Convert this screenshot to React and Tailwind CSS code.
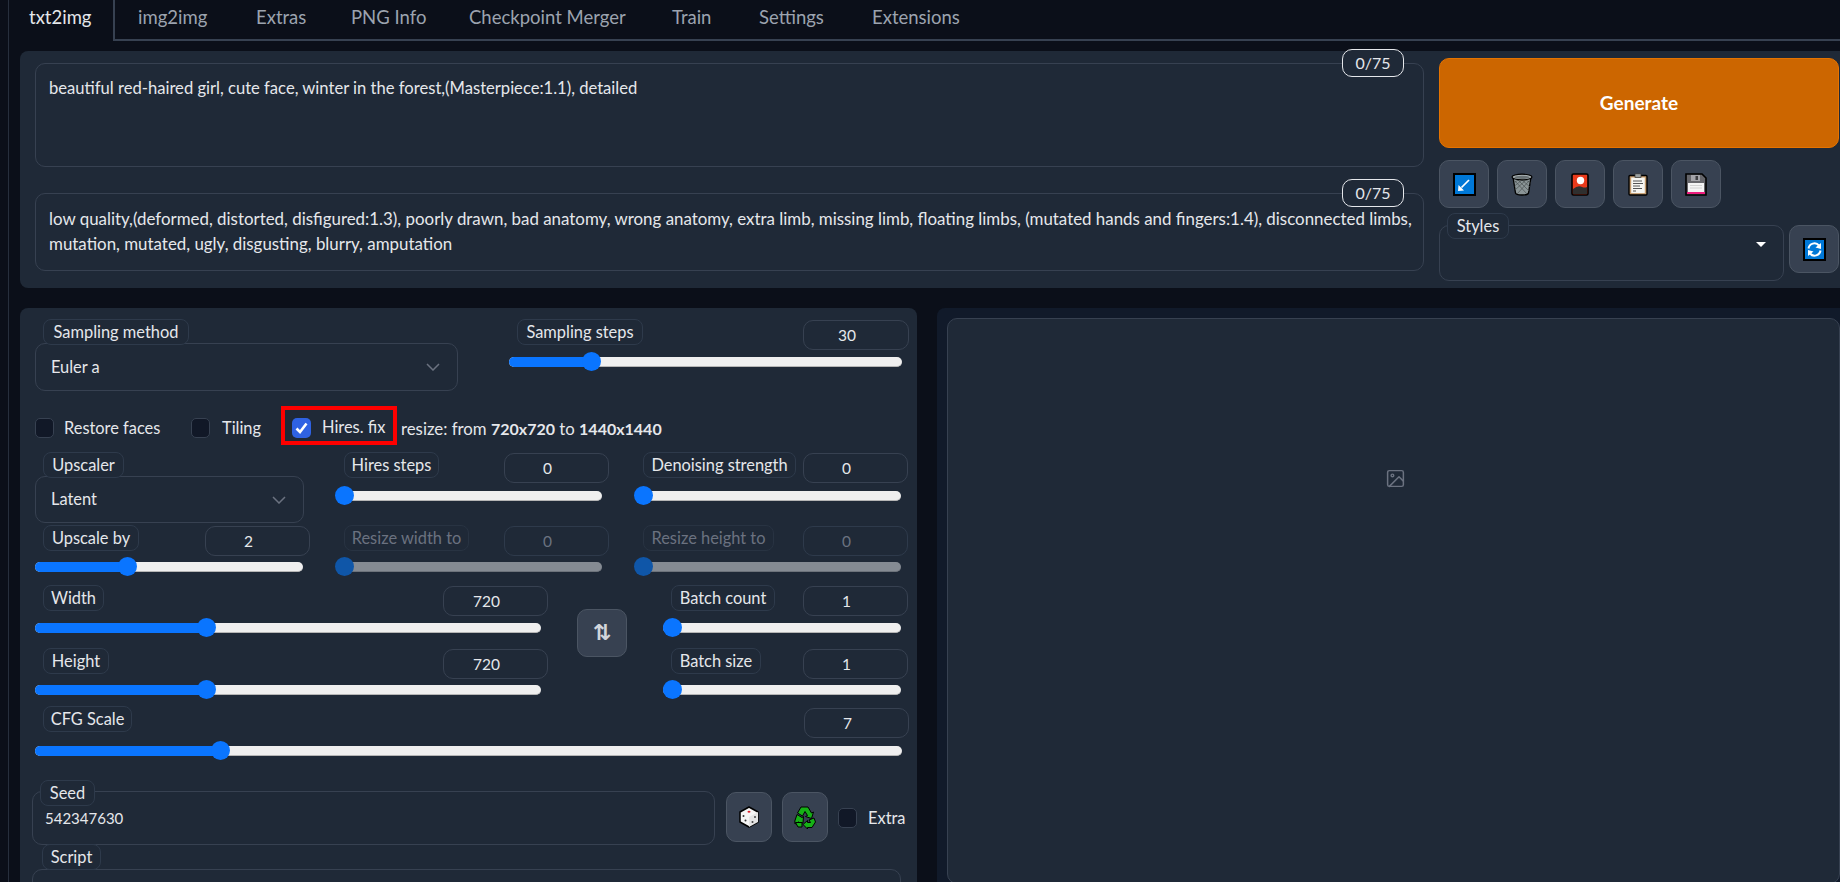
const inactiveTabs = [
  ['img2img', 'w-[118px]'],
  ['Extras', 'w-[95px]'],
  ['PNG Info', 'w-[118px]'],
  ['Checkpoint Merger', 'w-[203px]'],
  ['Train', 'w-[87px]'],
  ['Settings', 'w-[113px]'],
  ['Extensions', 'w-[120px]'],
]

function Label({ children, className = '', muted }) {
  return (
    <div className={`relative z-10 h-[26px] shrink-0 rounded-[8px] border bg-[#1f2937] text-center text-[16.4px] leading-[24px] whitespace-nowrap ${muted ? 'border-[#283342] text-[#6b7280]' : 'border-[#2e3a4b] text-[#e5e7eb]'} ${className}`}>
      {children}
    </div>
  )
}

function NumberBox({ value, muted, className = '' }) {
  return (
    <div className={`h-[30px] w-[105px] shrink-0 rounded-[10px] border pr-[18px] text-center text-[15.5px] leading-[29px] ${muted ? 'border-[#2e3a4b] text-[#6b7280]' : 'border-[#374151] text-[#e5e7eb]'} ${className}`}>
      {value}
    </div>
  )
}

function Slider({ at, muted, className = '' }) {
  return (
    <div className={`relative h-[10px] rounded-full border-b ${muted ? 'bg-[#858b93] border-[#6d737b]' : 'bg-[#efefef] border-[#b5b5b5]'} ${className}`}>
      <div className={`h-[10px] rounded-l-full ${muted ? 'bg-[#0f56a8]' : 'bg-[#0a75ff]'}`} style={{ width: at }} />
      <div
        className={`absolute top-[-5px] h-[19px] w-[19px] rounded-full ${muted ? 'bg-[#0f56a8]' : 'bg-[#0a75ff]'}`}
        style={{ left: at - 9 }}
      />
    </div>
  )
}

function SliderField({ label, labelClass, value, at, muted, numberClass = '', sliderClass = 'mt-[8px]' }) {
  return (
    <div className="w-full">
      <div className="flex items-start justify-between">
        <Label className={`ml-[8px] ${labelClass}`} muted={muted}>{label}</Label>
        <NumberBox value={value} muted={muted} className={numberClass} />
      </div>
      <div className="pr-[7px]">
        <Slider at={at} muted={muted} className={sliderClass} />
      </div>
    </div>
  )
}

function Chevron() {
  return (
    <svg width="14" height="8" viewBox="0 0 14 8" fill="none" stroke="#6b7280" strokeWidth="1.5">
      <polyline points="1,1 7,7 13,1" />
    </svg>
  )
}

function Dropdown({ text, className = '' }) {
  return (
    <div className={`relative flex items-center justify-between rounded-[10px] border border-[#374151] pl-[15px] pr-[17px] text-[16.4px] text-[#e5e7eb] ${className}`}>
      <span>{text}</span>
      <Chevron />
    </div>
  )
}

function Checkbox({ checked, className = '' }) {
  if (checked) {
    return (
      <div className={`flex h-[20px] w-[19px] shrink-0 items-center justify-center rounded-[5px] bg-[#2f62e3] ${className}`}>
        <svg width="13" height="12" viewBox="0 0 13 12" fill="none" stroke="#fff" strokeWidth="2.6">
          <polyline points="1.5,6.5 5,10 11.5,1.5" />
        </svg>
      </div>
    )
  }
  return <div className={`h-[20px] w-[19px] shrink-0 rounded-[5px] border border-[#374151] bg-[#111827] ${className}`} />
}

function IconButton({ children, className = 'h-[48px] w-[50px]' }) {
  return (
    <button className={`flex shrink-0 items-center justify-center rounded-[10px] border border-[#4b5563] bg-[#374151] ${className}`}>
      {children}
    </button>
  )
}

function ArrowIcon() {
  return (
    <svg width="23" height="23" viewBox="0 0 23 23">
      <rect x="1" y="1" width="21" height="21" fill="#0078d7" stroke="#000" strokeWidth="2" />
      <line x1="16" y1="7" x2="8.5" y2="14.5" stroke="#fff" strokeWidth="1.7" />
      <polygon points="5,18 5.5,12 11,17.5" fill="#fff" />
    </svg>
  )
}

function TrashIcon() {
  return (
    <svg width="22" height="23" viewBox="0 0 22 23">
      <path d="M2 4 L4.5 20 Q5 22 11 22 Q17 22 17.5 20 L20 4 Z" fill="#8a9496" stroke="#000" strokeWidth="1.3" />
      <path d="M4 8 L16 21 M7 7 L18 18 M11 7 L19 14 M15 7 L19.5 10 M18 8 L6 21 M15 7 L4 17 M11 7 L3.5 13 M7 7 L3 10" stroke="#4a5153" strokeWidth="0.7" fill="none" />
      <ellipse cx="11" cy="4" rx="10" ry="2.8" fill="#a8b0b2" stroke="#000" strokeWidth="1.2" />
      <ellipse cx="11" cy="4.4" rx="7.6" ry="1.6" fill="#6a7275" />
    </svg>
  )
}

function CardIcon() {
  return (
    <svg width="18" height="23" viewBox="0 0 18 23">
      <rect x="1" y="1" width="16" height="21" rx="1.5" fill="#ea3a1b" stroke="#000" strokeWidth="1.6" />
      <circle cx="9.5" cy="7.5" r="3.7" fill="#fff" />
      <path d="M2 16 Q7 12 11 14 Q14 15 16 14 V21 H2 Z" fill="#2f2f2f" />
    </svg>
  )
}

function ClipboardIcon() {
  return (
    <svg width="20" height="23" viewBox="0 0 20 23">
      <rect x="1" y="2.5" width="18" height="19.5" rx="1" fill="#c39a6b" stroke="#000" strokeWidth="1.4" />
      <rect x="3.2" y="4.5" width="13.6" height="15.6" fill="#f6f6f2" />
      <rect x="7" y="0.8" width="6" height="3.6" fill="#9aa0a0" stroke="#333" strokeWidth="0.7" />
      <path d="M5 8 H14 M5 10.5 H15 M5 13 H12 M5 15.5 H14 M5 18 H8" stroke="#555" strokeWidth="1" fill="none" />
    </svg>
  )
}

function FloppyIcon() {
  return (
    <svg width="22" height="23" viewBox="0 0 22 23">
      <path d="M1 1 H17 L21 5 V22 H1 Z" fill="#66666b" stroke="#000" strokeWidth="1.6" />
      <rect x="6" y="2" width="9" height="6" fill="#a3a3a8" />
      <rect x="10.5" y="3" width="2.5" height="4" fill="#3d3d40" />
      <rect x="3" y="10" width="16" height="9" fill="#f4f4f4" />
      <path d="M5 12.5 H17 M5 15 H17" stroke="#c9c9c9" strokeWidth="0.8" />
      <rect x="2" y="19" width="18" height="2" fill="#ec1c7e" />
    </svg>
  )
}

function RefreshIcon() {
  return (
    <svg width="23" height="23" viewBox="0 0 23 23">
      <rect x="1" y="1" width="21" height="21" fill="#0078d7" stroke="#000" strokeWidth="2" />
      <path d="M5.5 10.5 A6 6 0 0 1 16 7.5" stroke="#fff" strokeWidth="2" fill="none" />
      <polygon points="18,5 18,11 12.5,9.5" fill="#fff" />
      <path d="M17.5 12.5 A6 6 0 0 1 7 15.5" stroke="#fff" strokeWidth="2" fill="none" />
      <polygon points="5,18 5,12 10.5,13.5" fill="#fff" />
    </svg>
  )
}

function DiceIcon() {
  return (
    <svg width="20" height="22" viewBox="0 0 20 22">
      <polygon points="10,1 19,6 19,16 10,21 1,16 1,6" fill="#f5f5f5" stroke="#000" strokeWidth="1.5" strokeLinejoin="round" />
      <polygon points="10,11 19,6 19,16 10,21" fill="#e4e4e4" />
      <ellipse cx="10" cy="5.8" rx="1.5" ry="1" fill="#d9202a" />
      <circle cx="4.5" cy="10" r="1" fill="#333" />
      <circle cx="6.5" cy="14.5" r="1" fill="#333" />
      <circle cx="13.5" cy="16" r="1" fill="#444" />
      <circle cx="16" cy="11" r="1" fill="#444" />
    </svg>
  )
}

function RecycleIcon() {
  return (
    <svg width="22" height="23" viewBox="0 0 22 23">
      <g fill="#16b016" stroke="#000" strokeWidth="1" strokeLinejoin="round">
        <polygon points="7,1 14,1 17.5,7 19.5,6 17.5,12.5 11.5,10.5 13.5,9.5 11,5.5 8.5,10 3.5,7" />
        <polygon points="3,8.5 8,11.5 9.5,10.5 9,17 3,17 4.5,16 1,18 0.8,15" />
        <polygon points="1.5,16.5 8,16.5 8,21 4,21" />
        <polygon points="20,12 21.5,16 18,21.5 13.5,21.5 13.5,23 9,18.5 13.5,14.5 13.5,16.5 16.5,16.5 15,14" />
      </g>
    </svg>
  )
}

function ImageIcon() {
  return (
    <svg width="21" height="21" viewBox="0 0 24 24" fill="none" stroke="#6b7280" strokeWidth="1.7" strokeLinecap="round" strokeLinejoin="round">
      <rect x="3" y="3" width="18" height="18" rx="2" />
      <circle cx="8.5" cy="8.5" r="1.5" />
      <polyline points="21 15 16 10 5 21" />
    </svg>
  )
}

function PromptBox({ className, children }) {
  return (
    <div className={`relative rounded-[10px] border border-[#374151] pl-[13px] pt-[12px] leading-[25px] text-[#e5e7eb] ${className}`}>
      <div className="absolute right-[19px] top-[-15px] h-[28px] w-[62px] rounded-[10px] border border-[#e5e7eb] bg-[#1f2937] text-center text-[16px] leading-[26px]">0/75</div>
      {children}
    </div>
  )
}

export default function App() {
  return (
    <div className="h-[882px] w-[1840px] overflow-hidden bg-[#0b0f19] pl-[8px] text-[#e5e7eb] [font-family:Lato,'Noto_Sans',sans-serif]">
      <div className="h-[920px] border-l border-[#272f3d]">
        {/* tabs */}
        <div className="flex h-[41px] text-[18.5px] leading-[34px] text-[#9ca3af]">
          <div className="w-[106px] border-r-2 border-[#374151] pl-[20px] text-[#e5e7eb]">txt2img</div>
          <div className="flex flex-1 border-b-2 border-[#374151]">
            {inactiveTabs.map(([name, width]) => (
              <div key={name} className={`pl-[23px] ${width}`}>{name}</div>
            ))}
          </div>
        </div>

        <div className="pl-[11px] pt-[10px]">
          {/* prompt row */}
          <div className="flex h-[237px] rounded-l-[8px] bg-[#1f2937] pl-[15px]">
            <div className="w-[1389px] pt-[12px]">
              <PromptBox className="h-[104px] text-[16.6px]">
                beautiful red-haired girl, cute face, winter in the forest,(Masterpiece:1.1), detailed
              </PromptBox>
              <PromptBox className="mt-[26px] h-[78px] whitespace-nowrap text-[16.9px]">
                <div>low quality,(deformed, distorted, disfigured:1.3), poorly drawn, bad anatomy, wrong anatomy, extra limb, missing limb, floating limbs, (mutated hands and fingers:1.4), disconnected limbs,</div>
                <div>mutation, mutated, ugly, disgusting, blurry, amputation</div>
              </PromptBox>
            </div>

            <div className="ml-[15px] w-[400px] pt-[7px]">
              <button className="h-[90px] w-full rounded-[10px] border border-[#e57300] bg-[#cc6600] text-[19px] font-bold text-white">Generate</button>
              <div className="mt-[12px] flex gap-[8px]">
                <IconButton><ArrowIcon /></IconButton>
                <IconButton><TrashIcon /></IconButton>
                <IconButton><CardIcon /></IconButton>
                <IconButton><ClipboardIcon /></IconButton>
                <IconButton><FloppyIcon /></IconButton>
              </div>
              <div className="mt-[5px] flex gap-[5px]">
                <div className="w-[345px]">
                  <Label className="ml-[8px] w-[62px]">Styles</Label>
                  <div className="-mt-[14px] flex h-[56px] justify-end rounded-[10px] border border-[#374151] pr-[17px] pt-[16px]">
                    <div className="h-0 w-0 border-x-[5px] border-t-[5px] border-x-transparent border-t-white" />
                  </div>
                </div>
                <IconButton className="mt-[12px] h-[48px] w-[50px]"><RefreshIcon /></IconButton>
              </div>
            </div>
          </div>

          {/* settings + output */}
          <div className="mt-[20px] flex gap-[20px]">
            <div className="h-[640px] w-[897px] rounded-[8px] bg-[#1f2937] pl-[15px] pr-[8px] pt-[11px]">
              <div className="flex justify-between">
                <div className="w-[423px]">
                  <Label className="ml-[8px] w-[146px]">Sampling method</Label>
                  <Dropdown text="Euler a" className="-mt-[2px] h-[48px]" />
                </div>
                <div className="w-[400px]">
                  <SliderField label="Sampling steps" labelClass="w-[126px]" value="30" at={82} numberClass="mt-[1px] w-[106px]" sliderClass="mt-[7px]" />
                </div>
              </div>

              <div className="mt-[15px] flex h-[39px] items-center text-[16.4px]">
                <div className="flex w-[156px] items-center gap-[10px] pt-[6px]">
                  <Checkbox /><span>Restore faces</span>
                </div>
                <div className="flex w-[90px] items-center gap-[12px] pt-[6px]">
                  <Checkbox /><span>Tiling</span>
                </div>
                <div className="flex h-[39px] w-[116px] items-center gap-[11px] border-[4px] border-[#ff0000] pl-[7px] pt-[4px]">
                  <Checkbox checked /><span className="whitespace-nowrap">Hires. fix</span>
                </div>
                <div className="ml-[4px] whitespace-nowrap pt-[6px] text-[16.8px]">
                  resize: from <span className="text-[16px] font-bold">720x720</span> to <span className="text-[16px] font-bold">1440x1440</span>
                </div>
              </div>

              <div className="mt-[7px] grid grid-cols-[275px_273px_273px] grid-rows-[73px_60px] gap-x-[26px]">
                <div>
                  <Label className="ml-[8px] w-[81px]">Upscaler</Label>
                  <div className="w-[269px]">
                    <Dropdown text="Latent" className="-mt-[2px] h-[47px]" />
                  </div>
                </div>
                <SliderField label="Hires steps" labelClass="w-[95px]" value="0" at={8} numberClass="mt-[1px]" sliderClass="mt-[8px]" />
                <SliderField label="Denoising strength" labelClass="w-[153px]" value="0" at={8} numberClass="mt-[1px]" sliderClass="mt-[8px]" />
                <SliderField label="Upscale by" labelClass="w-[96px]" value="2" at={92} numberClass="mt-[1px]" sliderClass="mt-[6px]" />
                <SliderField label="Resize width to" labelClass="w-[125px]" value="0" at={8} muted numberClass="mt-[1px]" sliderClass="mt-[6px]" />
                <SliderField label="Resize height to" labelClass="w-[131px]" value="0" at={8} muted numberClass="mt-[1px]" sliderClass="mt-[6px]" />
              </div>

              <div className="flex">
                <div className="w-[513px]">
                  <SliderField label="Width" labelClass="w-[61px]" value="720" at={171} numberClass="mt-[1px]" sliderClass="mt-[7px]" />
                  <div className="mt-[15px]">
                    <SliderField label="Height" labelClass="w-[66px]" value="720" at={171} numberClass="mt-[1px]" sliderClass="mt-[6px]" />
                  </div>
                </div>
                <div className="ml-[29px] w-[50px] pt-[24px]">
                  <IconButton>
                    <span className="text-[22px] font-bold leading-none text-[#d1d5db] [font-family:'DejaVu_Sans',sans-serif]">⇅</span>
                  </IconButton>
                </div>
                <div className="ml-[36px] w-[245px]">
                  <SliderField label="Batch count" labelClass="w-[104px]" value="1" at={9} numberClass="mt-[1px]" sliderClass="mt-[7px]" />
                  <div className="mt-[15px]">
                    <SliderField label="Batch size" labelClass="w-[90px]" value="1" at={9} numberClass="mt-[1px]" sliderClass="mt-[6px]" />
                  </div>
                </div>
              </div>

              <div className="mt-[11px]">
                <SliderField label="CFG Scale" labelClass="w-[89px]" value="7" at={185} numberClass="mt-[2px]" sliderClass="mt-[8px]" />
              </div>

              <div className="-ml-[3px] mt-[24px] flex">
                <div className="w-[683px]">
                  <Label className="ml-[8px] w-[55px]">Seed</Label>
                  <div className="-mt-[15px] h-[54px] rounded-[10px] border border-[#374151] pl-[12px] pt-[14px] text-[15px] leading-[24px]">542347630</div>
                </div>
                <div className="ml-[11px] flex gap-[10px] pt-[12px]">
                  <IconButton className="h-[50px] w-[46px]"><DiceIcon /></IconButton>
                  <IconButton className="h-[50px] w-[46px]"><RecycleIcon /></IconButton>
                </div>
                <div className="ml-[10px] flex items-center gap-[11px] pt-[11px] text-[16.4px]">
                  <Checkbox /><span>Extra</span>
                </div>
              </div>

              <div className="-ml-[3px] -mt-[1px]">
                <Label className="ml-[10px] w-[59px]">Script</Label>
                <div className="-mt-[1px] h-[60px] w-[869px] rounded-[10px] border border-[#374151]" />
              </div>
            </div>

            <div className="h-[640px] flex-1 rounded-tl-[8px] bg-[#111a2a] pl-[10px] pt-[10px]">
              <div className="flex h-[566px] items-start justify-center rounded-[10px] border border-[#374151] bg-[#1f2937] pl-[3px] pt-[149px]">
                <ImageIcon />
              </div>
            </div>
          </div>
        </div>
      </div>
    </div>
  )
}
